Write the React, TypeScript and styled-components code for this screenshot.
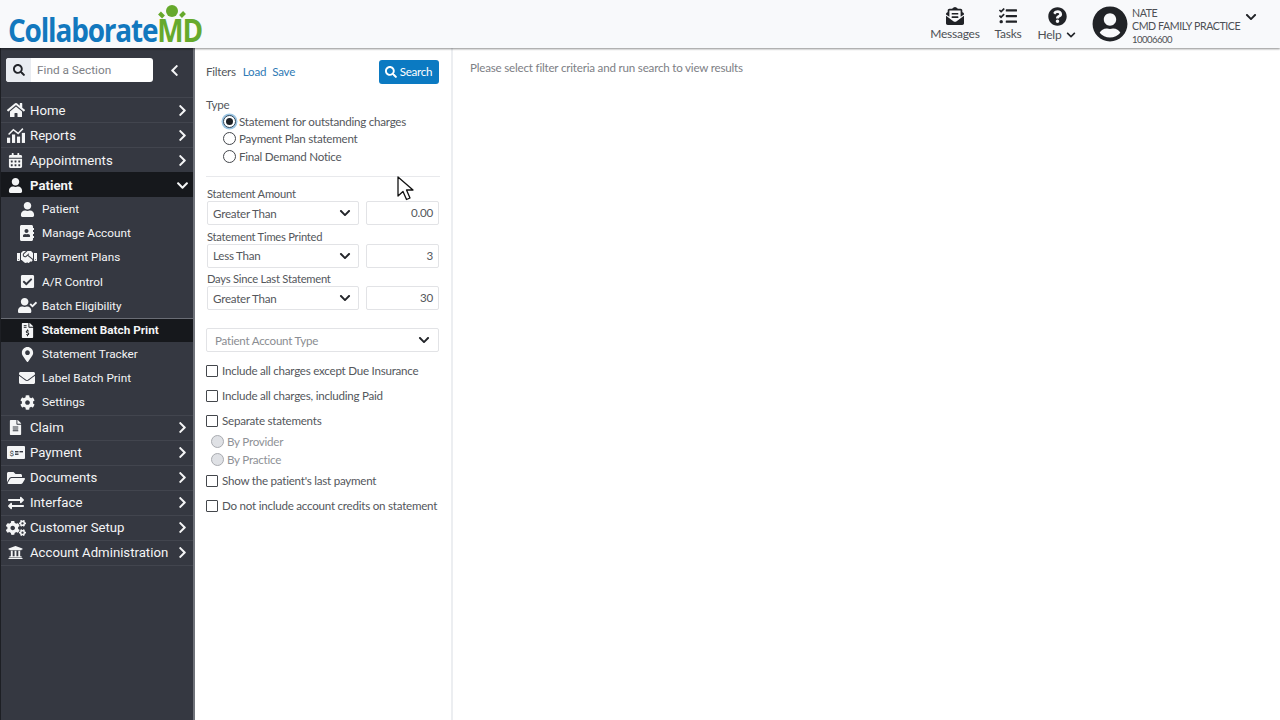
import React from "react";
import styled, { createGlobalStyle } from "styled-components";
import {
  FaHome, FaCalendarAlt, FaUser, FaAddressBook, FaHandshake, FaCheckSquare, FaUserCheck,
  FaFileInvoiceDollar, FaMapMarkerAlt, FaEnvelope, FaCog, FaFileAlt, FaFolderOpen, FaExchangeAlt,
  FaCogs, FaUniversity, FaEnvelopeOpenText, FaTasks, FaQuestionCircle, FaUserCircle, FaSearch,
  FaChevronRight, FaChevronDown, FaChevronLeft,
} from "react-icons/fa";

const Global = createGlobalStyle`
  html, body { margin: 0; padding: 0; width: 1280px; height: 720px; overflow: hidden; background: #fff; }
  * { box-sizing: border-box; }
  body { font-family: "Lato", "Liberation Sans", sans-serif; }
`;

const Page = styled.div`
  width: 1280px; height: 720px; display: flex; flex-direction: column; overflow: hidden;
`;
const Header = styled.header`
  height: 48px; flex: none; background: #f8f9fb; display: flex; align-items: flex-start;
  justify-content: space-between; box-shadow: 0 1px 2px rgba(0,0,0,.45); position: relative; z-index: 2;
`;
const Logo = styled.div`
  position: relative; margin: 12px 0 0 8px; height: 36px;
  font-family: "Open Sans", sans-serif; font-weight: 700; font-size: 32px; line-height: 36px;
`;
const LogoWord = styled.span`
  display: inline-block; transform: scaleX(.873); transform-origin: left center; letter-spacing: -1.35px; white-space: nowrap;
`;
const LogoBlue = styled.span` color: #1278be; `;
const LogoGreen = styled.span` color: #66a92c; letter-spacing: -1.2px; `;
const LogoMark = styled.svg` position: absolute; left: 149px; top: -8px; `;

const HeaderRight = styled.div` display: flex; align-items: flex-start; `;
const HeadAction = styled.div<{ $w: number }>`
  width: ${(p) => p.$w}px; display: flex; flex-direction: column; align-items: center; padding-top: 7px;
  font-size: 12px; line-height: 15px; letter-spacing: -.25px; color: #4d5055;
  svg { color: #212327; }
`;
const ActionLabel = styled.span` margin-top: 1px; display: flex; align-items: center; gap: 5px; `;
const Profile = styled.div` display: flex; align-items: flex-start; margin-left: 4px; width: 188px; padding-top: 6px; svg { flex: none; } `;
const ProfileText = styled.div`
  margin-left: 4px; display: flex; flex-direction: column; font-size: 10.6px; line-height: 13px; letter-spacing: -.4px; padding-top: 1px; color: #4d5055; white-space: nowrap;
`;
const ProfileSmall = styled.span` font-size: 9.5px; letter-spacing: -.5px; `;
const ProfileChevron = styled.span` margin: 5px 0 0 5px; color: #212327; line-height: 12px; `;

const Body = styled.div` flex: 1; display: flex; min-height: 0; `;
const Sidebar = styled.aside`
  width: 195px; flex: none; background: #353841; border-left: 1px solid #1d1f24; border-right: 2px solid #70737a;
  display: flex; flex-direction: column; font-family: "Roboto", sans-serif; color: #f4f5f6;
`;
const SearchRow = styled.div` height: 49px; display: flex; align-items: flex-start; padding: 10px 0 0 5px; `;
const SearchBox = styled.div`
  width: 147px; height: 24px; background: #fff; border-radius: 3px; display: flex; overflow: hidden;
`;
const SearchIcon = styled.div`
  width: 25px; background: #e9ecf1; display: flex; align-items: center; justify-content: center; color: #22242a;
`;
const SearchText = styled.span`
  padding-left: 6px; font-size: 11.8px; line-height: 24px; color: #7d8085;
`;
const Collapse = styled.span` margin: 6px 0 0 15px; color: #f4f5f6; line-height: 12px; `;
const Nav = styled.nav` border-bottom: 1px solid #42454e; `;
const NavItem = styled.div<{ $active?: boolean }>`
  height: 25px; display: flex; align-items: center; padding: 0 4px 0 0;
  border-top: 1px solid ${(p) => (p.$active ? "#16181c" : "#42454e")};
  background: ${(p) => (p.$active ? "#16181c" : "transparent")};
  font-size: 13.2px; font-weight: ${(p) => (p.$active ? 700 : 400)};
`;
const NavIcon = styled.span`
  width: 29px; flex: none; display: flex; align-items: center; justify-content: center; color: #f4f5f6;
`;
const NavLabel = styled.span` flex: 1; white-space: nowrap; `;
const SubList = styled.div` display: flex; flex-direction: column; padding: .6px 0 0; `;
const SubItem = styled.div<{ $active?: boolean }>`
  height: 24.15px; display: flex; align-items: center; padding-bottom: 1px; font-size: 11.75px; white-space: nowrap;
  font-weight: ${(p) => (p.$active ? 700 : 400)};
  background: ${(p) => (p.$active ? "#16181c" : "transparent")};
  border-top: ${(p) => (p.$active ? "1px solid #6a6d75" : "none")};
`;
const SubIcon = styled.span` width: 41px; flex: none; padding-left: 11px; display: flex; justify-content: center; `;

const Filters = styled.section`
  width: 258px; flex: none; border-right: 2px solid #eceef1; padding: 12px 12px 0 11px;
  font-size: 11.6px; letter-spacing: -.24px; color: #54575c;
`;
const FiltersTop = styled.div` height: 24px; display: flex; align-items: flex-start; line-height: 24px; `;
const LinkText = styled.a` color: #2f7ab5; margin-left: 7px; &+& { margin-left: 6px; } `;
const SearchButton = styled.button`
  margin-left: auto; width: 60px; height: 24px; padding: 0 1px 0 0; border: 0; border-radius: 3px; background: #0b7ac2; color: #fff;
  font: inherit; letter-spacing: inherit; display: flex; align-items: center; justify-content: center; gap: 3px;
`;
const TypeLabel = styled.div` margin-top: 14px; line-height: 14px; `;
const RadioRow = styled.label<{ $muted?: boolean }>`
  height: 17.5px; display: flex; align-items: center; gap: 3px; white-space: nowrap; padding-left: ${(p) => (p.$muted ? 5 : 17)}px;
  color: ${(p) => (p.$muted ? "#8e9196" : "#54575c")};
`;
const Radio = styled.span<{ $on?: boolean; $off?: boolean }>`
  width: 13px; height: 13px; border-radius: 50%; flex: none; border: 1px solid ${(p) => (p.$off ? "#a9abb0" : "#44474c")};
  background: ${(p) => (p.$off ? "#dfe1e5" : "#fff")}; display: flex; align-items: center; justify-content: center;
  ${(p) => p.$on && "box-shadow: 0 0 0 1.5px #9cc6e4; border-color:#33475a;"}
  &::after { content: ""; width: 7px; height: 7px; border-radius: 50%; background: ${(p) => (p.$on ? "#1d2025" : "transparent")}; }
`;
const RadioGroup = styled.div` margin-top: .7px; `;
const Divider = styled.div` height: 1px; background: #e8e9ec; margin: 11px -1px 0 0; `;
const AmountLabel = styled.div<{ $first?: boolean }>`
  margin: ${(p) => (p.$first ? "10px" : "4.5px")} 0 0 1px; height: 14px; line-height: 14px; font-size: 11.2px; white-space: nowrap;
`;
const FieldRow = styled.div` display: flex; gap: 7px; margin-left: 1px; `;
const SelectBox = styled.div<{ $wide?: boolean }>`
  width: ${(p) => (p.$wide ? "233px" : "152px")}; height: 24px; border: 1px solid #e2e3e6; border-radius: 2px; background: #fff;
  display: flex; align-items: center; justify-content: space-between; padding: 0 7px 0 5px;
  svg { color: #23252a; }
  ${(p) => p.$wide && "padding: 0 8px 0 8px; color:#8a8d92; margin-top: 18px;"}
`;
const NumberBox = styled.div`
  width: 73px; height: 24px; border: 1px solid #e2e3e6; border-radius: 2px; text-align: right; padding-right: 5px; line-height: 22px;
`;
const CheckRow = styled.label<{ $gap: number }>`
  display: flex; align-items: center; gap: 4px; height: 14px; margin-top: ${(p) => p.$gap}px; white-space: nowrap;
`;
const Check = styled.span` width: 12px; height: 12px; border: 1px solid #44474c; border-radius: 1px; flex: none; background: #fff; `;
const MutedGroup = styled.div` margin-top: 5.5px; `;
const Results = styled.main` flex: 1; padding: 12px 0 0 17px; font-size: 11.6px; letter-spacing: -.2px; line-height: 15px; color: #7d8085; `;
const Cursor = styled.svg` position: absolute; left: 397px; top: 176px; z-index: 3; `;

const Chevron = () => <FaChevronRight size={13} />;

function ReportsIcon() {
  return (
    <svg width="18" height="16" viewBox="0 0 17 15" fill="currentColor">
      <rect x="0" y="10" width="3" height="5" /><rect x="4.7" y="7" width="3" height="8" />
      <rect x="9.4" y="9" width="3" height="6" /><rect x="14" y="5.5" width="3" height="9.5" />
      <path d="M1.5 7 6 2.5l4.5 3.5L15 1.5" fill="none" stroke="currentColor" strokeWidth="1.4" />
    </svg>
  );
}
function PaymentIcon() {
  return (
    <svg width="18" height="13" viewBox="0 0 18 13">
      <rect width="18" height="13" rx="1" fill="#f4f5f6" />
      <text x="2.5" y="9.5" fontSize="8" fontFamily="Roboto" fill="#353841">$</text>
      <rect x="8" y="5" width="3.5" height="1.4" fill="#353841" /><rect x="12.5" y="5" width="3.5" height="1.4" fill="#353841" />
      <rect x="8" y="7.5" width="3.5" height="1.4" fill="#353841" />
    </svg>
  );
}

const top1: [string, React.ReactNode][] = [
  ["Home", <FaHome size={18} />], ["Reports", <ReportsIcon />], ["Appointments", <FaCalendarAlt size={15} />],
];
const subs: [string, React.ReactNode, boolean?][] = [
  ["Patient", <FaUser size={15} />], ["Manage Account", <FaAddressBook size={16} />], ["Payment Plans", <FaHandshake size={20} />],
  ["A/R Control", <FaCheckSquare size={15} />], ["Batch Eligibility", <FaUserCheck size={19} />],
  ["Statement Batch Print", <FaFileInvoiceDollar size={15} />, true], ["Statement Tracker", <FaMapMarkerAlt size={15} />],
  ["Label Batch Print", <FaEnvelope size={16} />], ["Settings", <FaCog size={15} />],
];
const top2: [string, React.ReactNode][] = [
  ["Claim", <FaFileAlt size={15} />], ["Payment", <PaymentIcon />], ["Documents", <FaFolderOpen size={18} />],
  ["Interface", <FaExchangeAlt size={16} />], ["Customer Setup", <FaCogs size={20} />], ["Account Administration", <FaUniversity size={15} />],
];

export default function App() {
  return (
    <Page>
      <Global />
      <Header>
        <Logo>
          <LogoWord><LogoBlue>Collaborate</LogoBlue><LogoGreen>MD</LogoGreen></LogoWord>
          <LogoMark width="30" height="17" viewBox="0 0 30 17" fill="#66a92c">
            <circle cx="15" cy="7" r="6" />
            <path d="M2.5 9 L6.5 13 M27.5 8.5 L23.5 12.5" stroke="#66a92c" strokeWidth="4" />
          </LogoMark>
        </Logo>
        <HeaderRight>
          <HeadAction $w={70}><FaEnvelopeOpenText size={18} /><ActionLabel>Messages</ActionLabel></HeadAction>
          <HeadAction $w={36}><FaTasks size={18} /><ActionLabel>Tasks</ActionLabel></HeadAction>
          <HeadAction $w={62}><FaQuestionCircle size={19} /><ActionLabel>Help <FaChevronDown size={10} /></ActionLabel></HeadAction>
          <Profile>
            <FaUserCircle size={36} color="#212327" />
            <ProfileText>
              <span>NATE</span><span>CMD FAMILY PRACTICE</span><ProfileSmall>10006600</ProfileSmall>
            </ProfileText>
            <ProfileChevron><FaChevronDown size={12} /></ProfileChevron>
          </Profile>
        </HeaderRight>
      </Header>
      <Body>
        <Sidebar>
          <SearchRow>
            <SearchBox><SearchIcon><FaSearch size={12} /></SearchIcon><SearchText>Find a Section</SearchText></SearchBox>
            <Collapse><FaChevronLeft size={13} /></Collapse>
          </SearchRow>
          <Nav>
            {top1.map(([l, i]) => <NavItem key={l}><NavIcon>{i}</NavIcon><NavLabel>{l}</NavLabel><Chevron /></NavItem>)}
            <NavItem $active><NavIcon><FaUser size={15} /></NavIcon><NavLabel>Patient</NavLabel><FaChevronDown size={13} /></NavItem>
            <SubList>
              {subs.map(([l, i, a]) => <SubItem key={l} $active={a}><SubIcon>{i}</SubIcon>{l}</SubItem>)}
            </SubList>
            {top2.map(([l, i]) => <NavItem key={l}><NavIcon>{i}</NavIcon><NavLabel>{l}</NavLabel><Chevron /></NavItem>)}
          </Nav>
        </Sidebar>
        <Filters>
          <FiltersTop>
            Filters<LinkText>Load</LinkText><LinkText>Save</LinkText>
            <SearchButton><FaSearch size={12} />Search</SearchButton>
          </FiltersTop>
          <TypeLabel>Type</TypeLabel>
          <RadioGroup>
            <RadioRow><Radio $on />Statement for outstanding charges</RadioRow>
            <RadioRow><Radio />Payment Plan statement</RadioRow>
            <RadioRow><Radio />Final Demand Notice</RadioRow>
          </RadioGroup>
          <Divider />
          <AmountLabel $first>Statement Amount</AmountLabel>
          <FieldRow><SelectBox>Greater Than<FaChevronDown size={12} /></SelectBox><NumberBox>0.00</NumberBox></FieldRow>
          <AmountLabel>Statement Times Printed</AmountLabel>
          <FieldRow><SelectBox>Less Than<FaChevronDown size={12} /></SelectBox><NumberBox>3</NumberBox></FieldRow>
          <AmountLabel>Days Since Last Statement</AmountLabel>
          <FieldRow><SelectBox>Greater Than<FaChevronDown size={12} /></SelectBox><NumberBox>30</NumberBox></FieldRow>
          <SelectBox $wide>Patient Account Type<FaChevronDown size={12} /></SelectBox>
          <CheckRow $gap={11.5}><Check />Include all charges except Due Insurance</CheckRow>
          <CheckRow $gap={11}><Check />Include all charges, including Paid</CheckRow>
          <CheckRow $gap={11}><Check />Separate statements</CheckRow>
          <MutedGroup>
            <RadioRow $muted><Radio $off />By Provider</RadioRow>
            <RadioRow $muted><Radio $off />By Practice</RadioRow>
          </MutedGroup>
          <CheckRow $gap={5.5}><Check />Show the patient's last payment</CheckRow>
          <CheckRow $gap={11}><Check />Do not include account credits on statement</CheckRow>
        </Filters>
        <Results>Please select filter criteria and run search to view results</Results>
      </Body>
      <Cursor width="17" height="25" viewBox="0 0 17 25">
        <path d="M1 1v19l5-4.5 3.5 8 3.5-1.5-3.5-8H16Z" fill="#fff" stroke="#111" strokeWidth="1.3" strokeLinejoin="round" />
      </Cursor>
    </Page>
  );
}
